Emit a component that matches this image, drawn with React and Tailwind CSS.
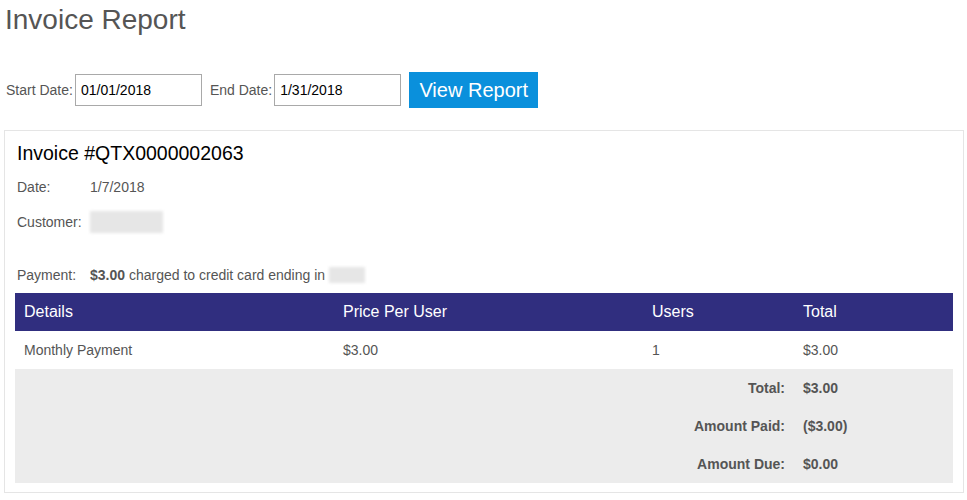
const lineItems = [
  { details: 'Monthly Payment', price: '$3.00', users: '1', total: '$3.00' },
];

const summary = [
  { label: 'Total:', value: '$3.00' },
  { label: 'Amount Paid:', value: '($3.00)' },
  { label: 'Amount Due:', value: '$0.00' },
];

// redacted values are shown as a soft grey smudge
const Redacted = ({ className }) => (
  <span className={`inline-block rounded-[1px] bg-[#e6e6e6] blur-[1.5px] ${className}`} />
);

const DateField = ({ label, value }) => (
  <label className="flex items-center gap-[2px]">
    <span>{label}</span>
    <input
      defaultValue={value}
      className="h-[32px] w-[127px] border border-[#a9a9a9] bg-white px-[5px] text-[14px] text-black outline-none"
    />
  </label>
);

export default function App() {
  return (
    <div className="min-h-[500px] bg-white px-[4px] text-[#555] font-['Liberation_Sans',Arial,sans-serif]">
      <h1 className="pl-[1px] pt-[4px] text-[28px] leading-[32px] text-[#555]">Invoice Report</h1>

      {/* date range filter */}
      <div className="mt-[36px] flex items-center pl-[2px] text-[14px]">
        <DateField label="Start Date:" value="01/01/2018" />
        <div className="ml-[8px]">
          <DateField label="End Date:" value="1/31/2018" />
        </div>
        <button className="ml-[8px] h-[36px] w-[129px] bg-[#0a90dc] text-[20px] text-white">
          View Report
        </button>
      </div>

      <div className="mt-[22px] w-[960px] border border-[#e5e5e5] px-[10px] pb-[9px] pt-[10px]">
        <h2 className="pl-[2px] text-[19.5px] leading-[24px] text-black">Invoice #QTX0000002063</h2>

        <div className="mt-[11px] pl-[2px] text-[14px]">
          <div className="flex h-[22px] items-center">
            <span className="w-[73px]">Date:</span>
            <span>1/7/2018</span>
          </div>
          <div className="mt-[13px] flex h-[22px] items-center">
            <span className="w-[73px]">Customer:</span>
            <Redacted className="h-[22px] w-[73px]" />
          </div>
          <div className="mt-[31px] flex h-[22px] items-center">
            <span className="w-[73px]">Payment:</span>
            <span>
              <b className="font-bold">$3.00</b> charged to credit card ending in
            </span>
            <Redacted className="ml-[4px] h-[16px] w-[36px]" />
          </div>
        </div>

        <table className="mt-[7px] w-full border-collapse text-left">
          <thead>
            <tr className="h-[38px] bg-[#302e7f] text-[16px] text-white">
              <th className="w-[319px] pl-[9px] font-normal">Details</th>
              <th className="w-[309px] pl-[9px] font-normal">Price Per User</th>
              <th className="w-[151px] pl-[9px] font-normal">Users</th>
              <th className="pl-[9px] font-normal">Total</th>
            </tr>
          </thead>
          <tbody className="text-[14px]">
            {lineItems.map((item) => (
              <tr key={item.details} className="h-[38px]">
                <td className="pl-[9px]">{item.details}</td>
                <td className="pl-[9px]">{item.price}</td>
                <td className="pl-[9px]">{item.users}</td>
                <td className="pl-[9px]">{item.total}</td>
              </tr>
            ))}
            {summary.map((row) => (
              <tr key={row.label} className="h-[38px] bg-[#ececec] font-bold">
                <td colSpan={3} className="pr-[9px] text-right">{row.label}</td>
                <td className="pl-[9px]">{row.value}</td>
              </tr>
            ))}
          </tbody>
        </table>
      </div>
    </div>
  );
}
